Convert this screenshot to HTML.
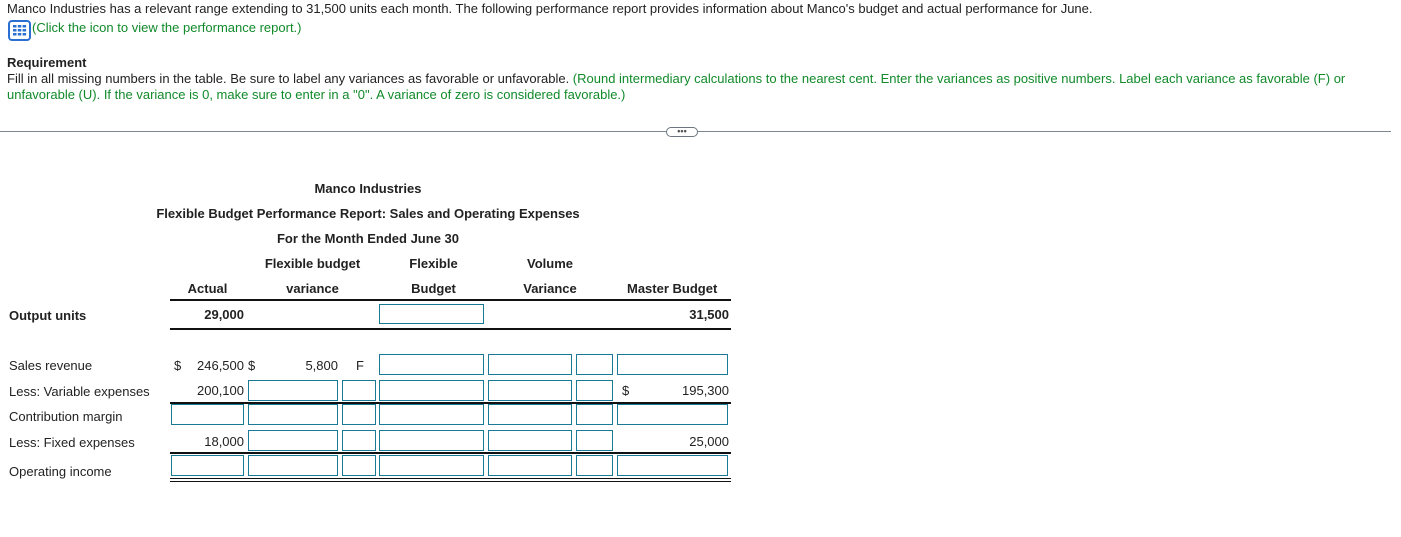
<!DOCTYPE html>
<html><head><style>
body{margin:0;width:1401px;height:537px;background:#fff;font-family:"Liberation Sans",Arial,sans-serif;font-size:13px;color:#222;position:relative;overflow:hidden}
.a{position:absolute;white-space:nowrap}
.g{color:#118a2a}
.b{font-weight:bold}
.bx{position:absolute;border:1px solid #1a7a95;box-sizing:border-box;background:#fff}
.ln{position:absolute;left:170px;width:561px;height:2px;background:#111}
.c{text-align:center}
.r{text-align:right}
</style></head><body>
<div class="a" style="left:7px;top:1px">Manco Industries has a relevant range extending to 31,500 units each month. The following performance report provides information about Manco's budget and actual performance for June.</div>
<svg class="a" style="left:8px;top:20px" width="23" height="21" viewBox="0 0 23 21"><rect x="1" y="1" width="21" height="19" rx="3" fill="#fff" stroke="#2a6fd1" stroke-width="2"/><g fill="#2a6fd1"><rect x="5" y="5" width="3.5" height="2.5"/><rect x="9.8" y="5" width="3.5" height="2.5"/><rect x="14.6" y="5" width="3.5" height="2.5"/><rect x="5" y="9" width="3.5" height="2.5"/><rect x="9.8" y="9" width="3.5" height="2.5"/><rect x="14.6" y="9" width="3.5" height="2.5"/><rect x="5" y="13" width="3.5" height="2.5"/><rect x="9.8" y="13" width="3.5" height="2.5"/><rect x="14.6" y="13" width="3.5" height="2.5"/></g></svg>
<div class="a g" style="left:32px;top:20px">(Click the icon to view the performance report.)</div>
<div class="a b" style="left:7px;top:55px">Requirement</div>
<div class="a" style="left:7px;top:71px">Fill in all missing numbers in the table. Be sure to label any variances as favorable or unfavorable. <span class="g">(Round intermediary calculations to the nearest cent. Enter the variances as positive numbers. Label each variance as favorable (F) or</span></div>
<div class="a g" style="left:7px;top:87px">unfavorable (U). If the variance is 0, make sure to enter in a "0". A variance of zero is considered favorable.)</div>
<div class="a" style="left:0;top:131px;width:1391px;height:1px;background:#7d8894"></div>
<div class="a" style="left:666px;top:127px;width:30px;height:8px;border:1px solid #6c7680;border-radius:5px;background:#fff;font-size:9px;line-height:6px;text-align:center;color:#555;font-weight:bold">•••</div>

<div class="a b c" style="left:168px;width:400px;top:181px">Manco Industries</div>
<div class="a b c" style="left:118px;width:500px;top:206px">Flexible Budget Performance Report: Sales and Operating Expenses</div>
<div class="a b c" style="left:168px;width:400px;top:231px">For the Month Ended June 30</div>
<div class="a b c" style="left:250px;width:125px;top:256px">Flexible budget</div>
<div class="a b c" style="left:250px;width:125px;top:281px">variance</div>
<div class="a b c" style="left:382px;width:103px;top:256px">Flexible</div>
<div class="a b c" style="left:382px;width:103px;top:281px">Budget</div>
<div class="a b c" style="left:490px;width:120px;top:256px">Volume</div>
<div class="a b c" style="left:490px;width:120px;top:281px">Variance</div>
<div class="a b c" style="left:170px;width:75px;top:281px">Actual</div>
<div class="a b" style="left:627px;top:281px">Master Budget</div>
<div class="ln" style="top:299px"></div>

<div class="a b" style="left:9px;top:308px">Output units</div>
<div class="a b r" style="left:170px;width:74px;top:307px">29,000</div>
<div class="bx" style="left:379px;top:304px;width:105px;height:20px"></div>
<div class="a b r" style="left:620px;width:109px;top:307px">31,500</div>
<div class="ln" style="top:328px"></div>

<div class="a" style="left:9px;top:358px">Sales revenue</div>
<div class="a" style="left:9px;top:384px">Less: Variable expenses</div>
<div class="a" style="left:9px;top:409px">Contribution margin</div>
<div class="a" style="left:9px;top:435px">Less: Fixed expenses</div>
<div class="a" style="left:9px;top:464px">Operating income</div>

<div class="a" style="left:174px;top:358px">$</div>
<div class="a r" style="left:180px;width:64px;top:358px">246,500</div>
<div class="a" style="left:248px;top:358px">$</div>
<div class="a r" style="left:280px;width:58px;top:358px">5,800</div>
<div class="a" style="left:356px;top:358px">F</div>
<div class="a r" style="left:180px;width:64px;top:383px">200,100</div>
<div class="a r" style="left:180px;width:64px;top:434px">18,000</div>
<div class="a" style="left:622px;top:383px">$</div>
<div class="a r" style="left:640px;width:89px;top:383px">195,300</div>
<div class="a r" style="left:640px;width:89px;top:434px">25,000</div>

<div class="bx" style="left:379px;top:354px;width:105px;height:21px"></div>
<div class="bx" style="left:488px;top:354px;width:84px;height:21px"></div>
<div class="bx" style="left:576px;top:354px;width:37px;height:21px"></div>
<div class="bx" style="left:617px;top:354px;width:111px;height:21px"></div>

<div class="bx" style="left:248px;top:380px;width:90px;height:21px"></div>
<div class="bx" style="left:342px;top:380px;width:34px;height:21px"></div>
<div class="bx" style="left:379px;top:380px;width:105px;height:21px"></div>
<div class="bx" style="left:488px;top:380px;width:84px;height:21px"></div>
<div class="bx" style="left:576px;top:380px;width:37px;height:21px"></div>
<div class="ln" style="top:402px"></div>

<div class="bx" style="left:171px;top:404px;width:73px;height:21px"></div>
<div class="bx" style="left:248px;top:404px;width:90px;height:21px"></div>
<div class="bx" style="left:342px;top:404px;width:34px;height:21px"></div>
<div class="bx" style="left:379px;top:404px;width:105px;height:21px"></div>
<div class="bx" style="left:488px;top:404px;width:84px;height:21px"></div>
<div class="bx" style="left:576px;top:404px;width:37px;height:21px"></div>
<div class="bx" style="left:617px;top:404px;width:111px;height:21px"></div>

<div class="bx" style="left:248px;top:430px;width:90px;height:21px"></div>
<div class="bx" style="left:342px;top:430px;width:34px;height:21px"></div>
<div class="bx" style="left:379px;top:430px;width:105px;height:21px"></div>
<div class="bx" style="left:488px;top:430px;width:84px;height:21px"></div>
<div class="bx" style="left:576px;top:430px;width:37px;height:21px"></div>
<div class="ln" style="top:452px"></div>

<div class="bx" style="left:171px;top:455px;width:73px;height:21px"></div>
<div class="bx" style="left:248px;top:455px;width:90px;height:21px"></div>
<div class="bx" style="left:342px;top:455px;width:34px;height:21px"></div>
<div class="bx" style="left:379px;top:455px;width:105px;height:21px"></div>
<div class="bx" style="left:488px;top:455px;width:84px;height:21px"></div>
<div class="bx" style="left:576px;top:455px;width:37px;height:21px"></div>
<div class="bx" style="left:617px;top:455px;width:111px;height:21px"></div>
<div class="ln" style="top:478px;height:1px"></div>
<div class="ln" style="top:481px;height:1px"></div>
</body></html>
